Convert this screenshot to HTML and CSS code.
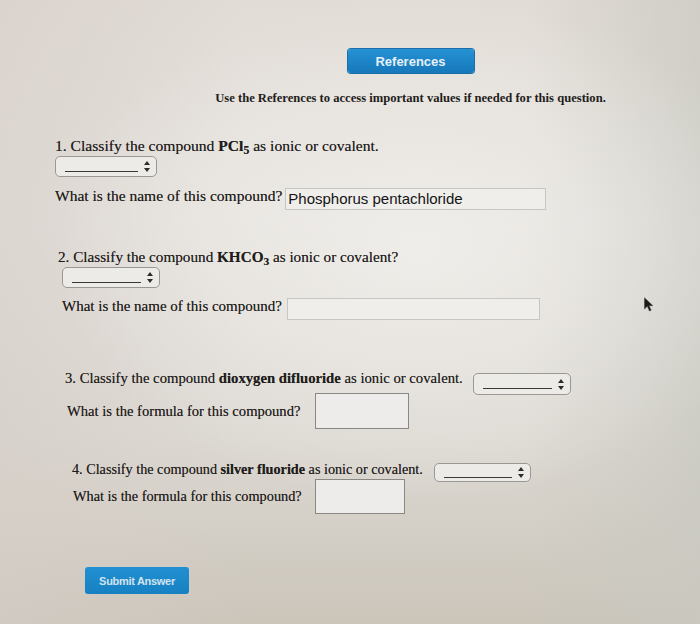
FILE: index.html
```html
<!DOCTYPE html>
<html>
<head>
<meta charset="utf-8">
<link rel="stylesheet" href="styles.css">
</head>
<body>
<div class="page">
  <header class="refs">
    <div class="ref-btn">References</div>
    <p class="refs-note">Use the References to access important values if needed for this question.</p>
  </header>

  <section class="q q1">
    <p class="qt">1. Classify the compound <b>PCl<sub>5</sub></b> as ionic or covalent.</p>
    <div class="sel w102"><span class="blank"></span><svg class="arr" viewBox="0 0 6 11"><path d="M3 0L6 4H0Z M3 11L6 7H0Z"/></svg></div>
    <div class="row r1"><span class="lbl">What is the name of this compound?</span><div class="inp inp-wide w261">Phosphorus pentachloride</div></div>
  </section>

  <section class="q q2">
    <p class="qt">2. Classify the compound <b>KHCO<sub>3</sub></b> as ionic or covalent?</p>
    <div class="sel w98 ml4"><span class="blank"></span><svg class="arr" viewBox="0 0 6 11"><path d="M3 0L6 4H0Z M3 11L6 7H0Z"/></svg></div>
    <div class="row r2"><span class="lbl">What is the name of this compound?</span><div class="inp inp-wide w253"></div></div>
  </section>

  <section class="q q3">
    <div class="trow">
      <p class="qt">3. Classify the compound <b>dioxygen difluoride</b> as ionic or covalent.</p>
      <div class="sel w98"><span class="blank"></span><svg class="arr" viewBox="0 0 6 11"><path d="M3 0L6 4H0Z M3 11L6 7H0Z"/></svg></div>
    </div>
    <div class="row r3"><span class="lbl">What is the formula for this compound?</span><div class="inp box"></div></div>
  </section>

  <section class="q q4">
    <div class="trow">
      <p class="qt">4. Classify the compound <b>silver fluoride</b> as ionic or covalent.</p>
      <div class="sel w97"><span class="blank"></span><svg class="arr" viewBox="0 0 6 11"><path d="M3 0L6 4H0Z M3 11L6 7H0Z"/></svg></div>
    </div>
    <div class="row r4"><span class="lbl">What is the formula for this compound?</span><div class="inp box"></div></div>
  </section>

  <div class="submit">Submit Answer</div>

  <svg class="cursor" viewBox="0 0 11 16"><path d="M0.5 0.5L0.5 13L3.6 10L6 15.2L7.9 14.3L5.6 9.3L9.8 9.3Z"/></svg>
</div>
</body>
</html>
```

FILE: styles.css
```css
html, body {
  margin: 0;
  padding: 0;
}

body {
  width: 700px;
  height: 624px;
  overflow: hidden;
  font-family: "Liberation Serif", "Times New Roman", serif;
  color: #1f1d1b;
  background:
    radial-gradient(ellipse 520px 360px at 420px 250px, rgba(240,238,234,0.9), rgba(240,238,234,0) 70%),
    linear-gradient(90deg, rgba(214,206,200,0.6) 0%, rgba(214,206,200,0) 35%, rgba(214,214,208,0) 75%, rgba(200,200,192,0.7) 100%),
    linear-gradient(180deg, #e2dcd6 0%, #e6e3df 35%, #dcd8d2 70%, #cbc5ba 100%);
}

.page {
  position: relative;
  height: 624px;
  padding-top: 49px;
  box-sizing: border-box;
}

p { margin: 0; }

.refs {
  margin-left: 215px;
  width: 391px;
  display: flex;
  flex-direction: column;
  align-items: center;
}

.ref-btn {
  width: 126px;
  height: 24px;
  border-radius: 3px;
  background: linear-gradient(#2592d4, #1678ba);
  box-shadow: 0 0 0 1px #1b6fa9;
  color: #e6f1f8;
  font: bold 13px "Liberation Sans", Arial, sans-serif;
  display: flex;
  align-items: center;
  justify-content: center;
}

.refs-note {
  margin-top: 18px;
  font-weight: bold;
  font-size: 12.6px;
  line-height: 15px;
  white-space: nowrap;
}

.q { text-shadow: 0 0 0.5px rgba(30,28,26,0.6); }

.q b { font-weight: bold; }

.q sub {
  font-size: 0.75em;
  vertical-align: -0.25em;
  line-height: 0;
}

.q1 { margin: 30px 0 0 55px; font-size: 15.6px; }
.q2 { margin: 37px 0 0 58px; font-size: 15.2px; }
.q3 { margin: 48px 0 0 65px; font-size: 14.7px; }
.q4 { margin: 30px 0 0 72px; font-size: 14.2px; }

.r2 .lbl { font-size: 15px; }
.r3 .lbl { font-size: 14.6px; }
.r4 .lbl { font-size: 14.3px; }
.r1 .lbl { font-size: 15.5px; }

.qt {
  line-height: 20px;
  white-space: nowrap;
}

.trow {
  display: flex;
  align-items: flex-start;
}

.q3 .trow .sel { margin: 5px 0 0 10px; height: 22px; }
.q4 .trow .sel { margin: 4px 0 0 11px; height: 19px; }

.sel {
  height: 21px;
  box-sizing: border-box;
  border: 1px solid #9a9894;
  border-radius: 5px;
  background: #ecebe7;
  display: flex;
  align-items: center;
  padding: 0 6px 0 9px;
  margin-top: 0;
}

.blank {
  flex: 1;
  height: 1px;
  background: #3a3836;
  margin-top: 9px;
}

.arr {
  width: 6px;
  height: 11px;
  margin-left: 6px;
  fill: #2e2c2a;
}

.w102 { width: 102px; }
.w98 { width: 98px; }
.w97 { width: 97px; }
.ml4 { margin-left: 4px; }

.row {
  display: flex;
  align-items: center;
}

.r1 { margin-top: 11px; }
.r2 { margin: 10px 0 0 4px; }
.r3 { margin: -2px 0 0 2px; }
.r4 { margin: -3px 0 0 1px; }

.lbl { white-space: nowrap; }
.r1 .lbl { margin-top: -6px; }
.r2 .lbl { margin-top: -6px; }

.inp {
  box-sizing: border-box;
  border: 1px solid #c8c6c2;
  background: #efeeeb;
}

.inp-wide {
  height: 22px;
  margin-left: 3px;
  padding: 0 0 0 2px;
  font: 15px/20px "Liberation Sans", Arial, sans-serif;
  color: #141414;
  text-shadow: none;
}

.w261 { width: 261px; }
.w253 { width: 253px; margin-left: 5px; }

.box {
  width: 94px;
  height: 36px;
  border: 1px solid #8a8884;
  background: #edecea;
}

.r3 .box { margin-left: 15px; }
.r4 .box { margin-left: 13px; width: 90px; height: 35px; }

.submit {
  margin: 53px 0 0 85px;
  width: 104px;
  height: 27px;
  border-radius: 3px;
  background: linear-gradient(#2190d2, #1680c2);
  color: #d3e4ee;
  font: bold 11px "Liberation Sans", Arial, sans-serif;
  letter-spacing: -0.3px;
  display: flex;
  align-items: center;
  justify-content: center;
}

.cursor {
  position: absolute;
  left: 644px;
  top: 297px;
  width: 10px;
  height: 15px;
  fill: #1a1a1a;
  stroke: #4a4a4a;
  stroke-width: 0.6;
}
```
